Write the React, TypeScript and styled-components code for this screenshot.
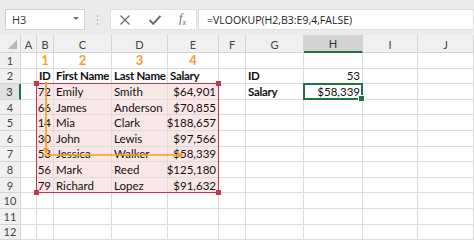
import React from 'react';
import styled, { createGlobalStyle } from 'styled-components';

const GlobalStyle = createGlobalStyle`
    html, body {
        margin: 0;
        padding: 0;
        background: #ffffff;
        overflow: hidden;
    }
    body {
        font-family: "Lato", "Liberation Sans", sans-serif;
    }
`;

// column widths: row header, A..J
const COLS = [21, 16, 17, 58, 56, 51, 27, 58, 59, 55, 56];
const LETTERS = ['A', 'B', 'C', 'D', 'E', 'F', 'G', 'H', 'I', 'J'];
const HEAD_H = 18;
const ROW_H = 15.6;
const ORANGE = '#f3a21f';

const colStart = (i: number) => COLS.slice(0, i).reduce((a, b) => a + b, 0);
const rowTop = (r: number) => HEAD_H + (r - 1) * ROW_H;

type Cell = { text?: string; bold?: boolean; right?: boolean; orange?: boolean; fill?: boolean };

const people = [
    ['72', 'Emily', 'Smith', '$64,901'],
    ['66', 'James', 'Anderson', '$70,855'],
    ['14', 'Mia', 'Clark', '$188,657'],
    ['30', 'John', 'Lewis', '$97,566'],
    ['53', 'Jessica', 'Walker', '$58,339'],
    ['56', 'Mark', 'Reed', '$125,180'],
    ['79', 'Richard', 'Lopez', '$91,632'],
];

function buildRows(): Cell[][] {
    const rows: Cell[][] = [];
    for (let r = 1; r <= 12; r++) {
        const row: Cell[] = LETTERS.map(() => ({}));
        if (r === 1) {
            row[1] = { text: '1', orange: true };
            row[2] = { text: '2', orange: true };
            row[3] = { text: '3', orange: true };
            row[4] = { text: '4', orange: true };
        }
        if (r === 2) {
            row[1] = { text: 'ID', bold: true };
            row[2] = { text: 'First Name', bold: true };
            row[3] = { text: 'Last Name', bold: true };
            row[4] = { text: 'Salary', bold: true };
            row[6] = { text: 'ID', bold: true };
            row[7] = { text: '53', right: true };
        }
        if (r >= 3 && r <= 9) {
            const p = people[r - 3];
            row[1] = { text: p[0], right: true, fill: true };
            row[2] = { text: p[1], fill: true };
            row[3] = { text: p[2], fill: true };
            row[4] = { text: p[3], right: true, fill: true };
        }
        if (r === 3) {
            row[6] = { text: 'Salary', bold: true };
            row[7] = { text: '$58,339', right: true };
        }
        rows.push(row);
    }
    return rows;
}

function App() {
    const rows = buildRows();

    return (
        <>
            <GlobalStyle />
            <Page>
                <FormulaBar>
                    <NameBox>
                        <span>H3</span>
                        <DropArrow />
                    </NameBox>
                    <Grip>
                        <i /><i /><i />
                    </Grip>
                    <ButtonBox>
                        <svg width="12" height="12" viewBox="0 0 12 12">
                            <path d="M1.5 1.5 L10.5 10.5 M10.5 1.5 L1.5 10.5" stroke="#6b6b6b" strokeWidth="1.3" fill="none" />
                        </svg>
                        <svg width="14" height="12" viewBox="0 0 14 12">
                            <path d="M1.5 6 L5.2 9.8 L12.5 1.8" stroke="#6b6b6b" strokeWidth="2" fill="none" />
                        </svg>
                        <Fx>f<sub>x</sub></Fx>
                    </ButtonBox>
                    <FormulaInput>=VLOOKUP(H2,B3:E9,4,FALSE)</FormulaInput>
                </FormulaBar>

                <Sheet>
                    <Corner><Triangle /></Corner>
                    {LETTERS.map((l) => (
                        <ColHead key={l} $active={l === 'H'}>{l}</ColHead>
                    ))}
                    {rows.map((row, ri) => (
                        <React.Fragment key={ri}>
                            <RowHead $active={ri + 1 === 3}>{ri + 1}</RowHead>
                            {row.map((c, ci) => (
                                <CellBox key={ci} $bold={c.bold} $right={c.right} $orange={c.orange} $fill={c.fill}>
                                    {c.text}
                                </CellBox>
                            ))}
                        </React.Fragment>
                    ))}

                    <RangeBorder
                        style={{
                            left: colStart(2) - 1,
                            top: rowTop(3) - 1,
                            width: colStart(6) - colStart(2) + 1,
                            height: rowTop(10) - rowTop(3) + 1,
                        }}
                    >
                        <Handle $x="left" $y="top" />
                        <Handle $x="right" $y="top" />
                        <Handle $x="left" $y="bottom" />
                        <Handle $x="right" $y="bottom" />
                    </RangeBorder>

                    <ActiveCell
                        style={{
                            left: colStart(8) - 1,
                            top: rowTop(3) - 1,
                            width: COLS[8] + 1,
                            height: ROW_H + 1,
                        }}
                    >
                        <FillHandle />
                    </ActiveCell>

                    <Arrows width="474" height="213" viewBox="0 0 474 213">
                        <defs>
                            <marker id="head" markerWidth="6" markerHeight="6" refX="5" refY="3" orient="auto" markerUnits="userSpaceOnUse">
                                <path d="M0 0 L6 3 L0 6 Z" fill={ORANGE} />
                            </marker>
                        </defs>
                        <line x1="46" y1="47" x2="46" y2="118" stroke={ORANGE} strokeWidth="1.7" markerEnd="url(#head)" />
                        <line x1="43" y1="120" x2="183" y2="120" stroke={ORANGE} strokeWidth="1.7" markerEnd="url(#head)" />
                    </Arrows>
                </Sheet>
            </Page>
        </>
    );
}

const Page = styled.div`
    width: 474px;
    height: 248px;
    overflow: hidden;
    background: #ffffff;
`;

const FormulaBar = styled.div`
    height: 35px;
    box-sizing: border-box;
    background: #ebebeb;
    display: flex;
    align-items: flex-start;
    padding: 9px 0 0 5px;
`;

const NameBox = styled.div`
    width: 80px;
    height: 21px;
    box-sizing: border-box;
    background: #ffffff;
    border: 1px solid #d2d2d2;
    display: flex;
    align-items: center;
    justify-content: space-between;
    padding: 0 5px 0 6px;
    font-family: "Open Sans", "Liberation Sans", sans-serif;
    font-size: 11px;
    color: #333;
`;

const DropArrow = styled.span`
    width: 0;
    height: 0;
    border-left: 3px solid transparent;
    border-right: 3px solid transparent;
    border-top: 3px solid #707070;
    margin-top: -2px;
`;

const Grip = styled.div`
    width: 25px;
    height: 21px;
    display: flex;
    flex-direction: column;
    align-items: center;
    justify-content: center;
    gap: 2px;

    i {
        display: block;
        width: 1px;
        height: 2px;
        background: #b8b8b8;
    }
`;

const ButtonBox = styled.div`
    width: 87px;
    height: 21px;
    box-sizing: border-box;
    background: #ffffff;
    border: 1px solid #e0e0e0;
    display: flex;
    align-items: center;
    justify-content: space-between;
    padding: 0 10px 0 8px;
`;

const Fx = styled.span`
    font-family: "Liberation Serif", serif;
    font-style: italic;
    font-size: 12px;
    color: #666;

    sub {
        font-size: 8px;
    }
`;

const FormulaInput = styled.div`
    flex: 1;
    height: 21px;
    box-sizing: border-box;
    background: #ffffff;
    border: 1px solid #e0e0e0;
    margin-left: 1px;
    padding-left: 8px;
    display: flex;
    align-items: center;
    font-family: "Open Sans", "Liberation Sans", sans-serif;
    font-size: 10.5px;
    color: #222;
`;

const Sheet = styled.div`
    position: relative;
    display: grid;
    grid-template-columns: ${COLS.map((c) => c + 'px').join(' ')};
    grid-template-rows: ${HEAD_H}px repeat(12, ${ROW_H}px);
`;

const HeaderBase = styled.div`
    box-sizing: border-box;
    background: #f0f0f0;
    border-right: 1px solid #d4d4d4;
    border-bottom: 1px solid #d4d4d4;
    display: flex;
    align-items: center;
    justify-content: center;
    font-size: 11px;
    color: #444;
`;

const Corner = styled(HeaderBase)`
    justify-content: flex-end;
    align-items: flex-end;
    padding: 0 3px 3px 0;
`;

const Triangle = styled.span`
    width: 0;
    height: 0;
    border-left: 9px solid transparent;
    border-bottom: 9px solid #b8b8b8;
`;

const ColHead = styled(HeaderBase)<{ $active?: boolean }>`
    background: ${(p) => (p.$active ? '#d3d3d3' : '#f0f0f0')};
    border-bottom: ${(p) => (p.$active ? '2px solid #217346' : '1px solid #d4d4d4')};
    color: ${(p) => (p.$active ? '#333' : '#444')};
    padding-top: 1px;
`;

const RowHead = styled(HeaderBase)<{ $active?: boolean }>`
    background: ${(p) => (p.$active ? '#e1e1e1' : '#f0f0f0')};
    border-right: ${(p) => (p.$active ? '2px solid #217346' : '1px solid #d4d4d4')};
    color: ${(p) => (p.$active ? '#333' : '#444')};
`;

const CellBox = styled.div<{ $bold?: boolean; $right?: boolean; $orange?: boolean; $fill?: boolean }>`
    box-sizing: border-box;
    border-right: 1px solid #dcdcdc;
    border-bottom: 1px solid #dcdcdc;
    background: ${(p) => (p.$fill ? '#f9e6e7' : '#ffffff')};
    display: flex;
    align-items: center;
    justify-content: ${(p) => (p.$orange ? 'center' : p.$right ? 'flex-end' : 'flex-start')};
    padding: 0 2px;
    font-size: ${(p) => (p.$orange ? '13px' : '11.5px')};
    font-weight: ${(p) => (p.$bold || p.$orange ? 700 : 400)};
    letter-spacing: ${(p) => (p.$bold ? '-0.3px' : '0')};
    color: ${(p) => (p.$orange ? '#f3a21f' : '#111')};
    white-space: nowrap;
    overflow: visible;
`;

const RangeBorder = styled.div`
    position: absolute;
    box-sizing: border-box;
    border: 1.5px solid #c1394f;
    pointer-events: none;
`;

const Handle = styled.span<{ $x: 'left' | 'right'; $y: 'top' | 'bottom' }>`
    position: absolute;
    width: 5px;
    height: 5px;
    background: #c1394f;
    ${(p) => p.$x}: -3px;
    ${(p) => p.$y}: -3px;
`;

const ActiveCell = styled.div`
    position: absolute;
    box-sizing: border-box;
    border: 2px solid #217346;
    pointer-events: none;
`;

const FillHandle = styled.span`
    position: absolute;
    right: -4px;
    bottom: -4px;
    width: 5px;
    height: 5px;
    background: #217346;
    border: 1px solid #ffffff;
`;

const Arrows = styled.svg`
    position: absolute;
    left: 0;
    top: 0;
    pointer-events: none;
`;

export default App;
